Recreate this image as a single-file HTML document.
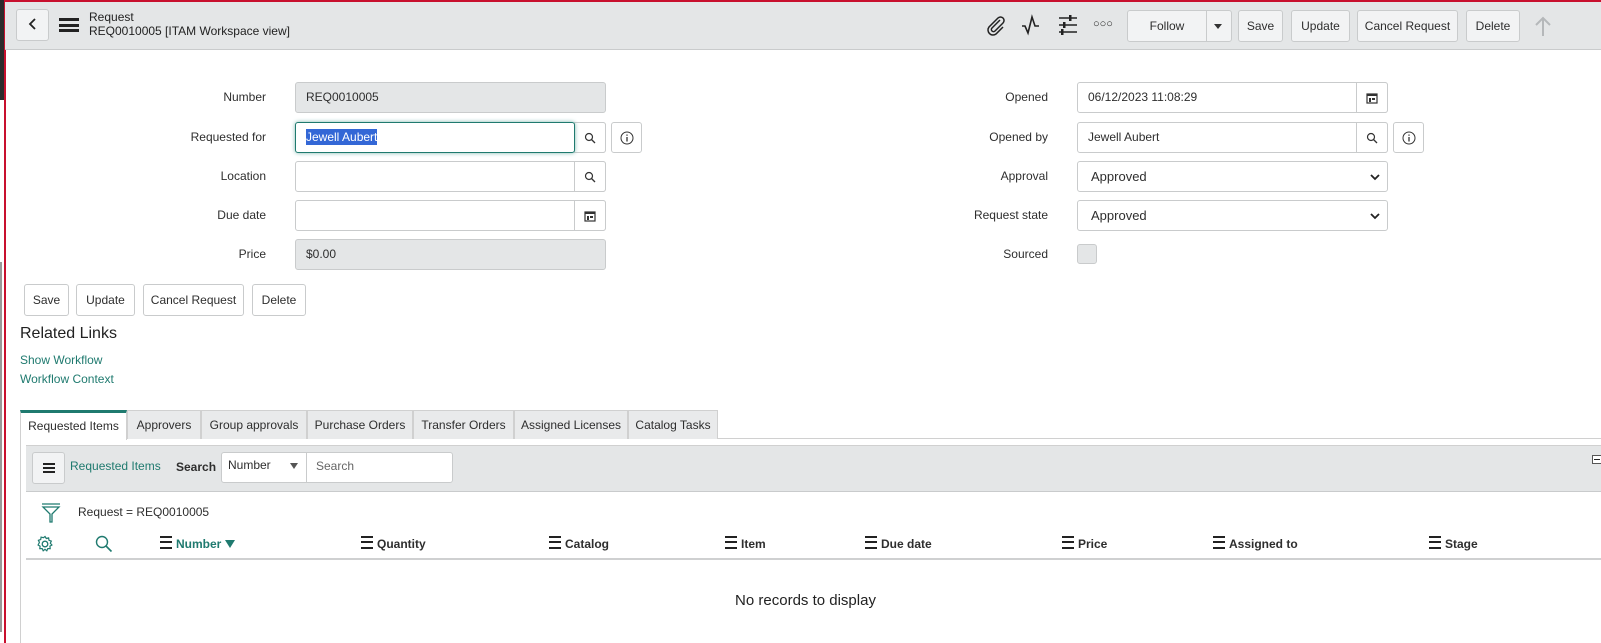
<!DOCTYPE html>
<html><head><meta charset="utf-8">
<style>
*{box-sizing:border-box;margin:0;padding:0}
body{width:1601px;height:643px;overflow:hidden;background:#fff;font-family:"Liberation Sans",Arial,sans-serif;font-size:12px;color:#2e2e2e;position:relative}
.a{position:absolute}
.hdr{left:5px;top:2px;width:1596px;height:48px;background:#e4e6e7;border-bottom:1px solid #c9cbcc}
.btn{position:absolute;height:32px;border:1px solid #c9cbcc;border-radius:3px;background:#f2f3f4;font-size:12px;line-height:30px;text-align:center;color:#2e2e2e}
.wbtn{background:#fff}
.lbl{position:absolute;width:200px;text-align:right;font-size:12px;line-height:31px}
.inp{position:absolute;height:31px;border:1px solid #c9cbcc;border-radius:3px;background:#fff;font-size:12px;line-height:29px;padding-left:10px}
.ro{background:#e4e6e7}
.ib{position:absolute;top:-1px;right:-1px;width:32px;height:31px;border:1px solid #c9cbcc;border-radius:0 3px 3px 0;display:flex;align-items:center;justify-content:center;background:#fff}
.info{position:absolute;width:31px;height:31px;border:1px solid #c9cbcc;border-radius:3px;display:flex;align-items:center;justify-content:center}
.tab{position:absolute;top:410px;height:29px;border:1px solid #d0d0d0;border-bottom:none;background:#e9eaeb;font-size:12px;line-height:28px;text-align:center}
.col{position:absolute;top:536px;font-size:12px;font-weight:bold;line-height:16px;color:#2e2e2e}
.col:before{content:"";display:inline-block;width:12px;height:9px;border-top:2px solid #222;border-bottom:2px solid #222;background:linear-gradient(#222,#222) 0 2.5px/12px 2px no-repeat;margin-right:4px;vertical-align:-1px}
a{color:#1f7a6f}
</style></head><body>
<div class="a" style="left:0;top:0;width:1601px;height:2px;background:#c8102e"></div>
<div class="a" style="left:0;top:0;width:4px;height:100px;background:#2b2b2b"></div>
<div class="a" style="left:0;top:262px;width:2px;height:370px;background:#999"></div>
<div class="a" style="left:4px;top:0;width:2px;height:643px;background:#c8102e"></div>
<div class="a hdr"></div>
<div class="btn" style="left:16px;top:9px;width:33px;height:32px;line-height:30px"><svg width="12" height="14" viewBox="0 0 12 14" style="vertical-align:-2px"><path d="M8 2L3 7l5 5" stroke="#222" stroke-width="1.8" fill="none"/></svg></div>
<div class="a" style="left:59px;top:18px;width:20px;height:14px;border-top:3px solid #222;border-bottom:3px solid #222"><div style="margin-top:2.5px;height:3px;background:#222"></div></div>
<div class="a" style="left:89px;top:10px;font-size:12px;line-height:14px;color:#222">Request<br>REQ0010005 [ITAM Workspace view]</div>
<svg class="a" style="left:985px;top:14px" width="22" height="22" viewBox="0 0 22 22"><path d="M15 6L7 14a2 2 0 0 0 3 3l8-8a3.5 3.5 0 0 0-5-5L4 13a5 5 0 0 0 7 7l7-7" stroke="#222" stroke-width="1.5" fill="none"/></svg>
<svg class="a" style="left:1020px;top:14px" width="22" height="22" viewBox="0 0 22 22"><path d="M2 12h3l3 7 4-16 3 9h4" stroke="#222" stroke-width="1.6" fill="none"/></svg>
<svg class="a" style="left:1057px;top:14px" width="22" height="22" viewBox="0 0 22 22"><path d="M2 4h18M2 11h18M2 18h18" stroke="#222" stroke-width="1.6"/><rect x="12" y="1" width="2.5" height="6" fill="#222"/><rect x="6" y="8" width="2.5" height="6" fill="#222"/><rect x="4" y="15" width="2.5" height="6" fill="#222"/></svg>
<div class="a" style="left:1093px;top:18px;font-size:11px;color:#222">○○○</div>
<div class="btn" style="left:1127px;top:10px;width:105px"><span style="position:absolute;left:0;width:78px">Follow</span><span style="position:absolute;left:78px;top:0;width:1px;height:30px;background:#c9cbcc"></span><span style="position:absolute;left:86px;top:13px;border:4px solid transparent;border-top:5px solid #333"></span></div>
<div class="btn" style="left:1238px;top:10px;width:45px">Save</div>
<div class="btn" style="left:1291px;top:10px;width:59px">Update</div>
<div class="btn" style="left:1357px;top:10px;width:101px">Cancel Request</div>
<div class="btn" style="left:1466px;top:10px;width:54px">Delete</div>
<svg class="a" style="left:1533px;top:15px" width="20" height="22" viewBox="0 0 20 22"><path d="M10 21V3M3 10l7-7 7 7" stroke="#b5b8ba" stroke-width="2" fill="none"/></svg>

<div class="lbl" style="left:66px;top:82px">Number</div>
<div class="inp ro" style="left:295px;top:82px;width:311px">REQ0010005</div>
<div class="lbl" style="left:66px;top:122px">Requested for</div>
<div class="inp" style="left:574px;top:122px;width:32px;padding:0"><div class="ib" style="border-radius:0 3px 3px 0"><svg width="12" height="12" viewBox="0 0 12 12"><circle cx="5" cy="5" r="3.5" stroke="#333" stroke-width="1.2" fill="none"/><path d="M7.5 7.5L11 11" stroke="#333" stroke-width="1.3"/></svg></div></div>
<div class="inp" style="left:295px;top:122px;width:280px;border-color:#1f7a6f;box-shadow:0 0 4px #7fb8b0"><span style="background:#3367d6;color:#fff;padding:1px 0">Jewell Aubert</span></div>
<div class="info" style="left:611px;top:122px"><svg width="14" height="14" viewBox="0 0 14 14"><circle cx="7" cy="7" r="6" stroke="#333" fill="none"/><path d="M7 6v4.5M7 3.5v1.3" stroke="#333" stroke-width="1.3"/></svg></div>
<div class="lbl" style="left:66px;top:161px">Location</div>
<div class="inp" style="left:295px;top:161px;width:311px"><div class="ib"><svg width="12" height="12" viewBox="0 0 12 12"><circle cx="5" cy="5" r="3.5" stroke="#333" stroke-width="1.2" fill="none"/><path d="M7.5 7.5L11 11" stroke="#333" stroke-width="1.3"/></svg></div></div>
<div class="lbl" style="left:66px;top:200px">Due date</div>
<div class="inp" style="left:295px;top:200px;width:311px"><div class="ib"><svg width="12" height="12" viewBox="0 0 12 12"><rect x="1" y="2" width="10" height="9" fill="none" stroke="#333" stroke-width="1.2"/><rect x="1" y="2" width="10" height="2" fill="#333"/><rect x="3" y="6" width="2" height="4" fill="#333"/><rect x="6" y="6" width="3" height="2" fill="#333"/></svg></div></div>
<div class="lbl" style="left:66px;top:239px">Price</div>
<div class="inp ro" style="left:295px;top:239px;width:311px">$0.00</div>

<div class="lbl" style="left:848px;top:82px">Opened</div>
<div class="inp" style="left:1077px;top:82px;width:311px">06/12/2023 11:08:29<div class="ib"><svg width="12" height="12" viewBox="0 0 12 12"><rect x="1" y="2" width="10" height="9" fill="none" stroke="#333" stroke-width="1.2"/><rect x="1" y="2" width="10" height="2" fill="#333"/><rect x="3" y="6" width="2" height="4" fill="#333"/><rect x="6" y="6" width="3" height="2" fill="#333"/></svg></div></div>
<div class="lbl" style="left:848px;top:122px">Opened by</div>
<div class="inp" style="left:1077px;top:122px;width:311px">Jewell Aubert<div class="ib"><svg width="12" height="12" viewBox="0 0 12 12"><circle cx="5" cy="5" r="3.5" stroke="#333" stroke-width="1.2" fill="none"/><path d="M7.5 7.5L11 11" stroke="#333" stroke-width="1.3"/></svg></div></div>
<div class="info" style="left:1393px;top:122px"><svg width="14" height="14" viewBox="0 0 14 14"><circle cx="7" cy="7" r="6" stroke="#333" fill="none"/><path d="M7 6v4.5M7 3.5v1.3" stroke="#333" stroke-width="1.3"/></svg></div>
<div class="lbl" style="left:848px;top:161px">Approval</div>
<div class="inp" style="left:1077px;top:161px;width:311px;padding-left:13px;font-size:13px">Approved<svg style="position:absolute;right:7px;top:11px" width="10" height="8" viewBox="0 0 10 8"><path d="M1 2l4 4 4-4" stroke="#222" stroke-width="1.8" fill="none"/></svg></div>
<div class="lbl" style="left:848px;top:200px">Request state</div>
<div class="inp" style="left:1077px;top:200px;width:311px;padding-left:13px;font-size:13px">Approved<svg style="position:absolute;right:7px;top:11px" width="10" height="8" viewBox="0 0 10 8"><path d="M1 2l4 4 4-4" stroke="#222" stroke-width="1.8" fill="none"/></svg></div>
<div class="lbl" style="left:848px;top:239px">Sourced</div>
<div class="a" style="left:1077px;top:244px;width:20px;height:20px;border:1px solid #c9cbcc;border-radius:3px;background:#e4e6e7"></div>

<div class="btn wbtn" style="left:24px;top:284px;width:45px">Save</div>
<div class="btn wbtn" style="left:76px;top:284px;width:59px">Update</div>
<div class="btn wbtn" style="left:143px;top:284px;width:101px">Cancel Request</div>
<div class="btn wbtn" style="left:252px;top:284px;width:54px">Delete</div>
<div class="a" style="left:20px;top:325px;font-size:16px;color:#222">Related Links</div>
<div class="a" style="left:20px;top:353px;font-size:12px"><a>Show Workflow</a></div>
<div class="a" style="left:20px;top:372px;font-size:12px"><a>Workflow Context</a></div>

<div class="a" style="left:20px;top:438px;width:1581px;height:1px;background:#d0d0d0"></div>
<div class="a" style="left:20px;top:438px;width:1px;height:205px;background:#d0d0d0"></div>
<div class="tab" style="left:20px;width:107px;background:#fff;border-top:3px solid #1f7a6f;height:30px;line-height:26px">Requested Items</div>
<div class="tab" style="left:127px;width:74px">Approvers</div>
<div class="tab" style="left:201px;width:106px">Group approvals</div>
<div class="tab" style="left:307px;width:106px">Purchase Orders</div>
<div class="tab" style="left:413px;width:101px">Transfer Orders</div>
<div class="tab" style="left:514px;width:114px">Assigned Licenses</div>
<div class="tab" style="left:628px;width:90px">Catalog Tasks</div>

<div class="a" style="left:26px;top:445px;width:1575px;height:47px;background:#e4e6e7;border-top:1px solid #d0d0d0;border-bottom:1px solid #c9cbcc"></div>
<div class="btn" style="left:32px;top:452px;width:33px;height:32px"><div style="position:absolute;left:10px;top:10px;width:12px;height:10px;border-top:2px solid #222;border-bottom:2px solid #222"><div style="margin-top:2px;height:2px;background:#222"></div></div></div>
<div class="a" style="left:70px;top:459px;color:#1f7a6f;font-size:12px">Requested Items</div>
<div class="a" style="left:176px;top:460px;font-weight:bold;font-size:12px">Search</div>
<div class="a" style="left:221px;top:452px;width:232px;height:31px;background:#fff;border:1px solid #c9cbcc;border-radius:3px"></div>
<div class="a" style="left:228px;top:458px;font-size:12px">Number</div>
<div class="a" style="left:290px;top:463px;border:4px solid transparent;border-top:6px solid #555"></div>
<div class="a" style="left:306px;top:453px;width:1px;height:29px;background:#c9cbcc"></div>
<div class="a" style="left:316px;top:459px;font-size:12px;color:#666">Search</div>
<div class="a" style="left:1592px;top:455px;width:10px;height:9px;border:1px solid #555;background:#fff"><div style="margin:3px 1px;height:1px;background:#222"></div></div>

<svg class="a" style="left:41px;top:502px" width="20" height="22" viewBox="0 0 20 22"><path d="M1 2h18M2 5h16L11 12v8h-2v-8z" stroke="#1f7a6f" stroke-width="1.3" fill="none"/></svg>
<div class="a" style="left:78px;top:505px;font-size:12px">Request = REQ0010005</div>
<svg class="a" style="left:36px;top:535px" width="18" height="18" viewBox="0 0 18 18"><circle cx="9" cy="9" r="2.8" stroke="#1f7a6f" stroke-width="1.3" fill="none"/><path d="M9 1.5l1.3 2 2.3-.6.4 2.4 2.3.8-1 2.1 1.6 1.8-2 1.2.3 2.4-2.4 0-1 2.2-1.8-1.5-1.8 1.5-1-2.2-2.4 0 .3-2.4-2-1.2L3.4 7.4l-1-2.1 2.3-.8.4-2.4 2.3.6z" stroke="#1f7a6f" stroke-width="1.2" fill="none"/></svg>
<svg class="a" style="left:95px;top:535px" width="18" height="18" viewBox="0 0 18 18"><circle cx="7" cy="7" r="5.5" stroke="#1f7a6f" stroke-width="1.4" fill="none"/><path d="M11 11l5.5 5.5" stroke="#1f7a6f" stroke-width="1.6"/></svg>
<div class="col" style="left:160px;color:#1f7a6f">Number <span style="display:inline-block;border:5px solid transparent;border-top:8px solid #1f7a6f;vertical-align:-5px"></span></div>
<div class="col" style="left:361px">Quantity</div>
<div class="col" style="left:549px">Catalog</div>
<div class="col" style="left:725px">Item</div>
<div class="col" style="left:865px">Due date</div>
<div class="col" style="left:1062px">Price</div>
<div class="col" style="left:1213px">Assigned to</div>
<div class="col" style="left:1429px">Stage</div>
<div class="a" style="left:26px;top:558px;width:1575px;height:2px;background:#cfd0d1"></div>
<div class="a" style="left:0;width:1601px;top:592px;text-align:center;font-size:15px;color:#222;padding-left:10px">No records to display</div>
</body></html>
